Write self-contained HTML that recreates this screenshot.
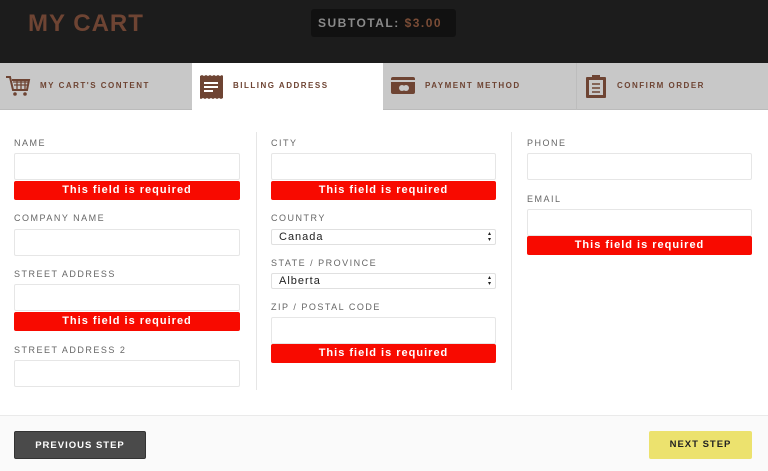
<!DOCTYPE html>
<html><head><meta charset="utf-8"><style>
*{box-sizing:border-box;margin:0;padding:0}
body{width:768px;height:471px;overflow:hidden;background:#fff;font-family:"Liberation Sans",Arial,sans-serif;position:relative}
.hdr{position:absolute;left:0;top:0;width:768px;height:63px;background:#1c1c1c}
.title{position:absolute;left:28px;top:10px;font-size:24px;font-weight:bold;color:#6e4433;letter-spacing:1px}
.sub{position:absolute;left:311px;top:9px;width:145px;height:28px;background:#111;border-radius:3px;color:#8a8a8a;font-size:12px;font-weight:bold;letter-spacing:1.5px;line-height:28px;padding-left:7px}
.sub b{color:#7a4c36}
.tabs{position:absolute;left:0;top:63px;width:768px;height:47px;background:#c8c8c8;border-bottom:1px solid #bbb}
.tab{position:absolute;top:0;height:47px;font-size:8px;font-weight:bold;letter-spacing:1.5px;color:#6e4433;line-height:46px}
.tab.act{background:#fff;height:48px}
.tab svg{position:absolute;top:12px}
.tab span{position:absolute;top:0;white-space:nowrap}
.div{position:absolute;top:132px;width:1px;height:258px;background:#e6e6e6}
label{position:absolute;font-size:9px;letter-spacing:1.5px;color:#666;white-space:nowrap}
.in{position:absolute;height:27px;border:1px solid #e6e6e6;border-radius:2px;background:#fff}
.err{position:absolute;height:19px;background:#f80a00;border-radius:2px;color:#fff;font-size:11px;font-weight:bold;letter-spacing:1px;text-align:center;line-height:19px}
.sel{position:absolute;height:16px;border:1px solid #e0e0e0;border-radius:2px;font-size:11px;letter-spacing:1px;color:#222;line-height:14px;padding-left:7px}
.sel:after{content:"▴\A▾";white-space:pre;position:absolute;right:3px;top:1px;font-size:6px;line-height:6px;color:#222}
.foot{position:absolute;left:0;top:415px;width:768px;height:56px;background:#fafafa;border-top:1px solid #eaeaea}
.btn{position:absolute;top:431px;height:28px;border-radius:2px;font-size:9.5px;font-weight:bold;letter-spacing:1px;text-align:center;line-height:28px}
</style></head><body>
<div class="hdr"><div class="title">MY CART</div><div class="sub">SUBTOTAL: <b>$3.00</b></div></div>
<div class="tabs">
 <div class="tab" style="left:0;width:192px"><svg style="left:5px" width="26" height="22" viewBox="0 0 26 22"><path d="M1 2h4l3 13h14l2-10H7" fill="none" stroke="#6e4433" stroke-width="2"/><path d="M8 7h15M9 10h13M12 5v10M16 5v10M20 5v10" stroke="#6e4433" stroke-width="1.3"/><circle cx="10" cy="19" r="1.8" fill="#6e4433"/><circle cx="20" cy="19" r="1.8" fill="#6e4433"/></svg><span style="left:40px">MY CART'S CONTENT</span></div>
 <div class="tab act" style="left:192px;width:191px"><svg style="left:8px" width="23" height="24" viewBox="0 0 23 24"><path d="M0 1l2-1 2 1 2-1 2 1 2-1 2 1 2-1 2 1 2-1 2 1 2-1 1 1v22l-2 1-2-1-2 1-2-1-2 1-2-1-2 1-2-1-2 1-2-1-2 1-2-1z" fill="#6e4433"/><path d="M4 8h14M4 12h14M4 16h9" stroke="#fff" stroke-width="2"/></svg><span style="left:41px">BILLING ADDRESS</span></div>
 <div class="tab" style="left:383px;width:193px"><svg style="left:8px" width="24" height="20" viewBox="0 0 24 20"><rect x="0" y="2" width="24" height="17" rx="2" fill="#6e4433"/><rect x="0" y="5" width="24" height="2" fill="#c8c8c8"/><circle cx="11" cy="13" r="3" fill="#c8c8c8"/><circle cx="15" cy="13" r="3" fill="#c8c8c8"/></svg><span style="left:42px">PAYMENT METHOD</span></div>
 <div class="tab" style="left:576px;width:192px;border-left:1px solid #bdbdbd"><svg style="left:8px;top:11px" width="22" height="25" viewBox="0 0 22 25"><rect x="1" y="3" width="20" height="21" rx="1" fill="#6e4433"/><rect x="4" y="6" width="14" height="15" fill="#c8c8c8"/><rect x="7" y="1" width="8" height="5" fill="#6e4433"/><path d="M7 10h8M7 14h8M7 18h8" stroke="#6e4433" stroke-width="1.6"/></svg><span style="left:40px">CONFIRM ORDER</span></div>
</div>
<div class="div" style="left:256px"></div><div class="div" style="left:511px"></div>

<label style="left:14px;top:138px">NAME</label><div class="in" style="left:14px;top:153px;width:226px"></div><div class="err" style="left:14px;top:181px;width:226px">This field is required</div>
<label style="left:14px;top:213px">COMPANY NAME</label><div class="in" style="left:14px;top:229px;width:226px"></div>
<label style="left:14px;top:269px">STREET ADDRESS</label><div class="in" style="left:14px;top:284px;width:226px"></div><div class="err" style="left:14px;top:312px;width:226px">This field is required</div>
<label style="left:14px;top:345px">STREET ADDRESS 2</label><div class="in" style="left:14px;top:360px;width:226px"></div>

<label style="left:271px;top:138px">CITY</label><div class="in" style="left:271px;top:153px;width:225px"></div><div class="err" style="left:271px;top:181px;width:225px">This field is required</div>
<label style="left:271px;top:213px">COUNTRY</label><div class="sel" style="left:271px;top:229px;width:225px">Canada</div>
<label style="left:271px;top:258px">STATE / PROVINCE</label><div class="sel" style="left:271px;top:273px;width:225px">Alberta</div>
<label style="left:271px;top:302px">ZIP / POSTAL CODE</label><div class="in" style="left:271px;top:317px;width:225px"></div><div class="err" style="left:271px;top:344px;width:225px">This field is required</div>

<label style="left:527px;top:138px">PHONE</label><div class="in" style="left:527px;top:153px;width:225px"></div>
<label style="left:527px;top:194px">EMAIL</label><div class="in" style="left:527px;top:209px;width:225px"></div><div class="err" style="left:527px;top:236px;width:225px">This field is required</div>

<div class="foot"></div>
<div class="btn" style="left:14px;width:132px;background:#4a4a4a;color:#fff;border:1px solid #333">PREVIOUS STEP</div>
<div class="btn" style="left:649px;width:103px;background:#ece26e;color:#222">NEXT STEP</div>
</body></html>
